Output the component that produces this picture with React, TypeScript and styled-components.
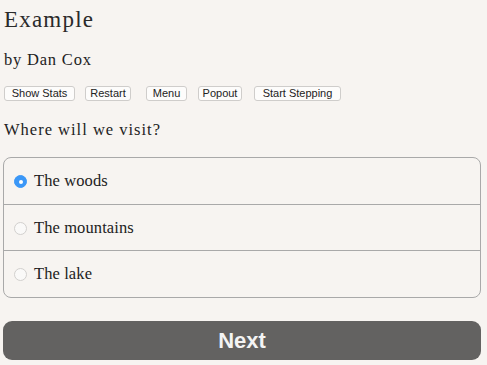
import React, { useState } from "react";
import styled, { createGlobalStyle } from "styled-components";

const Global = createGlobalStyle`
  html, body { margin: 0; padding: 0; background: #f7f4f1; }
  body { font-family: Georgia, "Liberation Serif", "Times New Roman", serif; color: #222; }
`;

const Page = styled.div`
  padding: 0 6px 0 3px;
  display: flex;
  flex-direction: column;
`;

const Title = styled.h1`
  margin: 7px 0 0 1px;
  font-size: 23px;
  letter-spacing: 1.2px;
  font-weight: normal;
  line-height: 26px;
  color: #2a2a2a;
`;

const Byline = styled.p`
  margin: 18px 0 0 1px;
  font-size: 16.5px;
  letter-spacing: 0.8px;
  line-height: 18px;
`;

const Toolbar = styled.div`
  display: flex;
  margin-top: 17px;
  margin-left: 1px;
`;

const ToolButton = styled.button<{ $gap: number; $w: number }>`
  font-family: "Liberation Sans", Arial, sans-serif;
  font-size: 11px;
  width: ${(p) => p.$w}px;
  height: 15px;
  line-height: 13px;
  padding: 0;
  margin-right: ${(p) => p.$gap}px;
  background: #fdfcfb;
  border: 1px solid #cfcdcb;
  border-radius: 3px;
  color: #222;
  white-space: nowrap;
`;

const Question = styled.p`
  margin: 20px 0 0 1px;
  font-size: 16.5px;
  letter-spacing: 1px;
  line-height: 18px;
`;

const Choices = styled.div`
  margin-top: 18px;
  border: 1px solid #a9a9a9;
  border-radius: 8px;
  display: flex;
  flex-direction: column;
`;

const Choice = styled.label<{ $last?: boolean; $h: number }>`
  display: flex;
  align-items: center;
  height: ${(p) => p.$h}px;
  padding-left: 10px;
  border-bottom: ${(p) => (p.$last ? "none" : "1px solid #a9a9a9")};
  font-size: 16.5px;
  letter-spacing: 0.1px;
  cursor: pointer;
`;

const Radio = styled.span<{ $on: boolean }>`
  width: 13px;
  height: 13px;
  box-sizing: border-box;
  border-radius: 50%;
  margin-right: 7px;
  margin-top: 1px;
  background: ${(p) => (p.$on ? "#3b97f7" : "#faf9f8")};
  border: 1px solid ${(p) => (p.$on ? "#3b97f7" : "#d2d0ce")};
  display: flex;
  align-items: center;
  justify-content: center;
  &::after {
    content: "";
    width: 4px;
    height: 4px;
    border-radius: 50%;
    background: #fff;
    display: ${(p) => (p.$on ? "block" : "none")};
  }
`;

const NextButton = styled.button`
  margin-top: 23px;
  height: 39px;
  width: 100%;
  border: none;
  border-radius: 9px;
  background: #636261;
  color: #f4f4f4;
  font-family: "Liberation Sans", Arial, sans-serif;
  font-weight: bold;
  font-size: 22px;
`;

const tools = [
  { label: "Show Stats", w: 71, gap: 10 },
  { label: "Restart", w: 46, gap: 15 },
  { label: "Menu", w: 41, gap: 11 },
  { label: "Popout", w: 44, gap: 12 },
  { label: "Start Stepping", w: 87, gap: 0 },
];

const options = [
  { label: "The woods", h: 46 },
  { label: "The mountains", h: 45 },
  { label: "The lake", h: 46 },
];

export default function App() {
  const [sel, setSel] = useState(0);
  return (
    <>
      <Global />
      <Page>
        <Title>Example</Title>
        <Byline>by Dan Cox</Byline>
        <Toolbar>
          {tools.map((t) => (
            <ToolButton key={t.label} $gap={t.gap} $w={t.w}>
              {t.label}
            </ToolButton>
          ))}
        </Toolbar>
        <Question>Where will we visit?</Question>
        <Choices>
          {options.map((o, i) => (
            <Choice
              key={o.label}
              $h={o.h}
              $last={i === options.length - 1}
              onClick={() => setSel(i)}
            >
              <Radio $on={sel === i} />
              {o.label}
            </Choice>
          ))}
        </Choices>
        <NextButton>Next</NextButton>
      </Page>
    </>
  );
}
